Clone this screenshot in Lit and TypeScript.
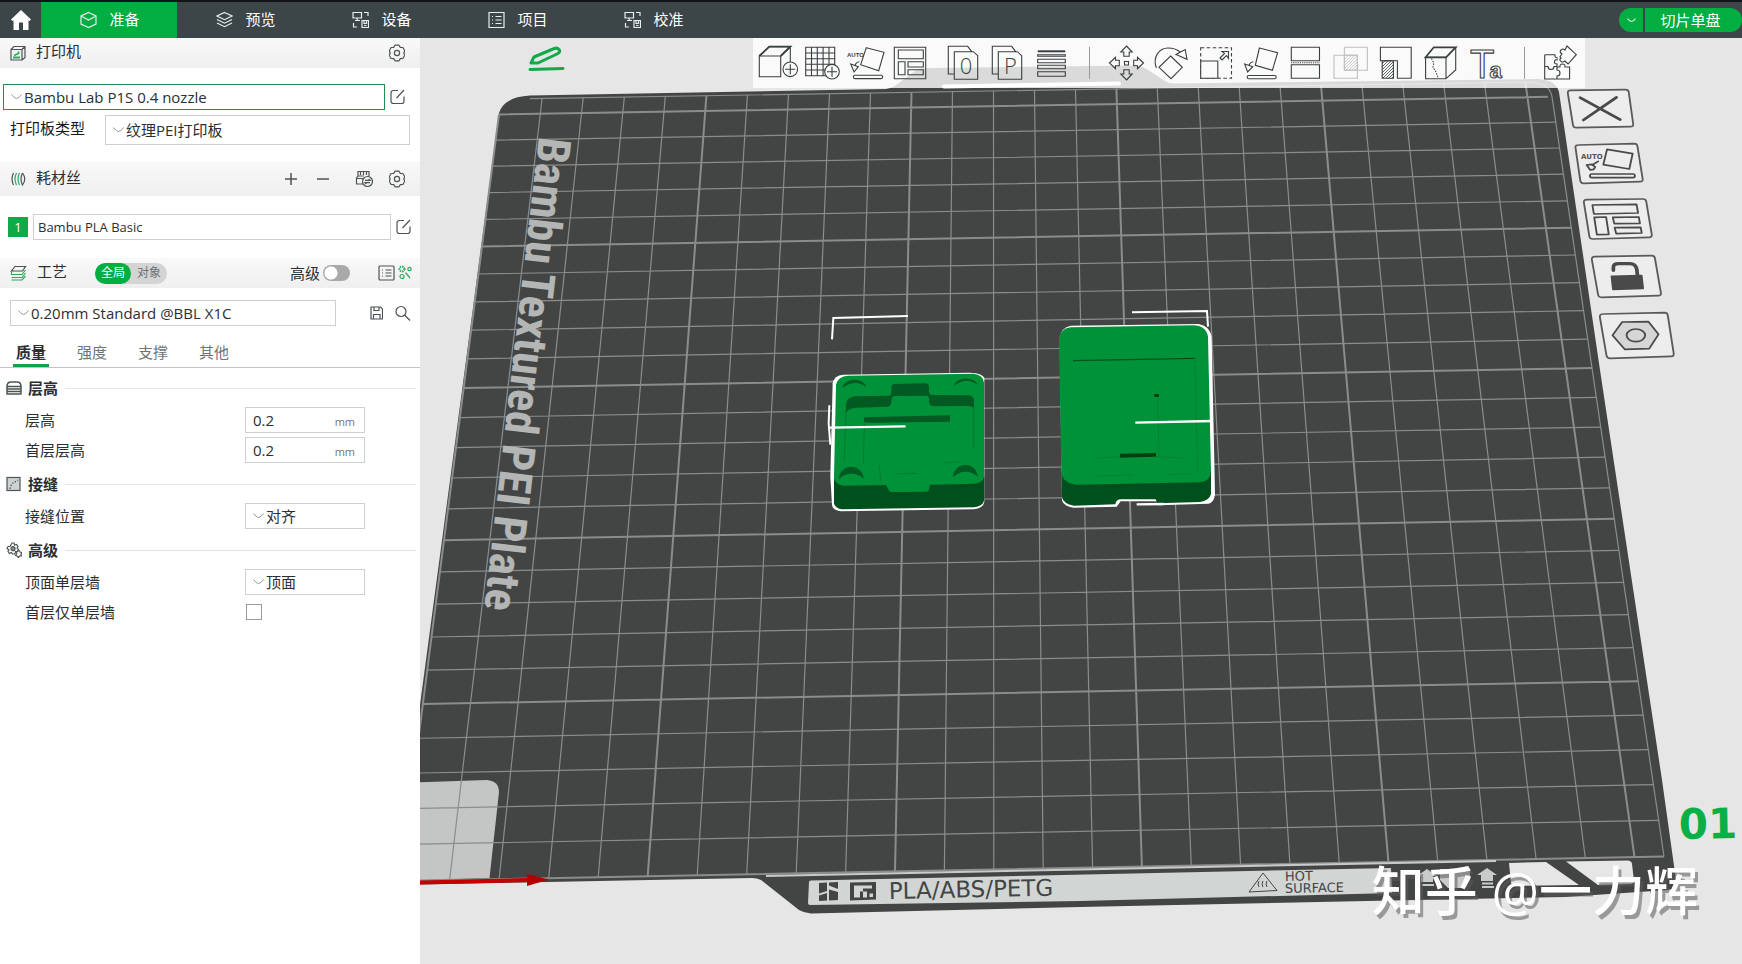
import { LitElement, html, svg, css, nothing } from "lit";
import { customElement, property } from "lit/decorators.js";

type Pt = [number, number];

/* ---------- build plate projection ---------- */

const BED = 25.6;
const MAJOR_TOP = 25;
const corner = {
  frontLeft: [400, 881] as Pt,
  frontRight: [1664, 856.5] as Pt,
  backRight: [1552, 96.7] as Pt,
  backLeft: [499, 114.4] as Pt,
};

function makeProjection(p0: Pt, p1: Pt, p2: Pt, p3: Pt) {
  const dx1 = p1[0] - p2[0];
  const dx2 = p3[0] - p2[0];
  const sx = p0[0] - p1[0] + p2[0] - p3[0];
  const dy1 = p1[1] - p2[1];
  const dy2 = p3[1] - p2[1];
  const sy = p0[1] - p1[1] + p2[1] - p3[1];
  const den = dx1 * dy2 - dx2 * dy1;
  const g = (sx * dy2 - dx2 * sy) / den;
  const h = (dx1 * sy - sx * dy1) / den;
  const a = p1[0] - p0[0] + g * p1[0];
  const b = p3[0] - p0[0] + h * p3[0];
  const d = p1[1] - p0[1] + g * p1[1];
  const e = p3[1] - p0[1] + h * p3[1];
  return (x: number, y: number): string => {
    const u = x / BED;
    const v = y / MAJOR_TOP;
    const w = g * u + h * v + 1;
    return `${((a * u + b * v + p0[0]) / w).toFixed(1)} ${((d * u + e * v + p0[1]) / w).toFixed(1)}`;
  };
}

const project = makeProjection(corner.frontLeft, corner.frontRight, corner.backRight, corner.backLeft);

function gridPath(major: boolean): string {
  const parts: string[] = [];
  for (let i = 0; i <= 25; i++) {
    if ((i % 5 === 0) !== major) continue;
    parts.push(`M${project(i, 0)}L${project(i, i === 0 ? 25 : BED)}`);
    parts.push(`M${project(0, i)}L${project(i === 25 ? 25.5 : BED, i)}`);
  }
  return parts.join("");
}

const MINOR = gridPath(false);
const MAJOR = gridPath(true);
const RIM = `M${project(0.7, BED)}L${project(25, BED)}Q${project(BED, BED)} ${project(BED, 25)}L${project(BED, 0)}`;

/* ---------- icons ---------- */

const plus = (x: number, y: number) => svg`<circle cx=${x} cy=${y} r="7.3" fill="#fafafa"/><path d="M${x - 5} ${y}h10M${x} ${y - 5}v10"/>`;
const hatch = svg`<defs><pattern id="hatch" width="3" height="3" patternUnits="userSpaceOnUse"><path d="M-1 1L1-1M0 3L3 0M2 4L4 2" stroke="currentColor" stroke-width=".8"/></pattern></defs>`;
const page = svg`<path d="M11.3 31H5.3V3.3H24.7L28.7 8.7M11.3 8.7H30.3L34.7 12.7V36.3H11.3Z"/>`;

const tools: Record<string, unknown> = {
  "添加": svg`<path d="M1.3 13H22.7V33.7H1.3ZM1.3 13L11.3 3.7H32.3L22.7 13M32.3 3.7V19"/><path stroke-width="1.8" d="M1.3 13L11.3 3.7H32.3L22.7 13"/>${plus(32.3, 26.3)}`,
  "添加盘": svg`<path d="M3.7 4.3H32.7V32.7H3.7ZM3.7 10H32.7M3.7 15.7H32.7M3.7 21.3H32.7M3.7 27H32.7M9.5 4.3V32.7M15.3 4.3V32.7M21.1 4.3V32.7M27 4.3V32.7"/>${plus(30, 28.7)}`,
  "自动朝向": svg`<text x="1" y="14" font-size="6" font-weight="700" fill="currentColor" stroke="none">AUTO</text><path d="M20.3 4.7L38 9.3 32.7 27.7 14.7 21.7ZM4.7 21L12.3 23.7 8 29ZM13.3 18.7Q10 19 9 22.5"/><rect x="7.3" y="32.3" width="29.4" height="3.3" rx="1.6"/>`,
  "自动摆放": svg`<path d="M4.3 4.3H35.7V35.7H4.3ZM8.3 7H33.3V15.7H8.3ZM8.3 18.7H15V31.7H8.3ZM18 18.7H33.3V24H18ZM18 26.7H33.3V31.7H18Z"/>`,
  "拆分为对象": svg`${page}<text class="thin" x="23" y="31" text-anchor="middle" font-size="22" fill="currentColor" stroke="none">0</text>`,
  "拆分为零件": svg`${page}<text class="thin" x="23.4" y="31" text-anchor="middle" font-size="22" fill="currentColor" stroke="none">P</text>`,
  "可变层高": svg`<path stroke-width="2" d="M6.7 8.3H34.3"/><path d="M6.7 11.8H34.3V13.3H6.7ZM6.7 16.3H34.3V19.7H6.7ZM6.7 22.3H34.3V25.7H6.7ZM6.7 28.7H34.3V33.3H6.7Z"/>`,
  "移动": svg`<path d="M18.5 18.5h4v3.5h-4ZM20.5 3L26.2 9H23.2V13.3H17.8V9H14.8ZM20.5 37L26.2 31H23.2V26.7H17.8V31H14.8ZM3.5 20L9.5 14.3V17.3H13.3V22.7H9.5V25.7ZM37.5 20L31.5 14.3V17.3H27.7V22.7H31.5V25.7Z"/>`,
  "旋转": svg`<path d="M19.6 13L31.3 24.3 20 35.7 8 24.3ZM5.3 25C1.5 14 8 5 17 5Q25 5 29.5 9.5M25 11.5L34.2 6.5 36 16.3Z"/>`,
  "缩放": svg`<path stroke-dasharray="3.5 2.5" d="M4.7 4.7H35.5V35.3H4.7Z"/><path fill="#fafafa" d="M4.7 18H21.8V35.3H4.7Z"/><path d="M24 15L28.5 10.5 26 8.5H32.5V15.5L30.5 12.5 26 17Z"/>`,
  "选择底面": svg`<path d="M18.4 5L36.6 9.7 31.4 27.3 14.3 22.3ZM3.6 21L11.8 23.7 6.6 29ZM12.3 18.7Q9 19 8 22.5"/><rect x="6.2" y="32.5" width="29" height="3.3" rx="1.6"/>`,
  "切割": svg`<path d="M5.3 4.3H33.5V17.7H5.3ZM5.3 21.7H33.5V35.3H5.3Z"/><path stroke-dasharray="1.2 1" d="M5 19.7H34"/>`,
  "布尔运算": svg`<g class="off"><path d="M13.4 4.3H36.4V27.3H13.4ZM3 12.3H26.4V35.3H3Z"/><path fill="url(#hatch)" d="M13.4 12.3H26.4V27.3H13.4Z"/></g>`,
  "支撑绘制": svg`<path d="M4.4 4.3H35.2V35.3H21.4V17.7H4.4Z"/><path fill="url(#hatch)" d="M6.2 17.7H17.4V35.3H6.2Z"/>`,
  "接缝绘制": svg`<path d="M4.6 14.3H25V35.7H4.6ZM34.7 4.3V27L25 35.7"/><path stroke-width="1.8" d="M4.6 14.3L12.8 4.3H34.7L25 14.3Z"/><path stroke-dasharray="1.5 1.2" d="M10.5 15.5L12.8 20 12 24 15 29 17.3 35.5"/>`,
  "文字形状": svg`<text x="4" y="35.3" font-size="40" fill="none">T<tspan font-size="22" font-weight="700" dx="-5">a</tspan></text>`,
  "装配视图": svg`<path d="M4.7 11.7H15Q14.5 15 18 15M4.7 11.7V23.5M4.7 23.5H8Q8 26.5 11 26.5T14 23.5H17V21Q14 21 14.5 18.5T18 17M4.7 23.5V36H29.6V24H25Q25.5 21 22.5 21T20 24H17V27Q20 27 20 30T17 33V36M20 13.7L22 11Q19 9 21 7T25 7L27 3 36.3 11.7 28 21 25 18Q22 20 20.5 18T21 15Z"/>`,
};

const gear = svg`<path d="M6 1.2h4l1.3 2.2 2.6.1 2 3.4-1.2 2.1 1.2 2.1-2 3.4-2.6.1L10 16.8H6l-1.3-2.2-2.6-.1-2-3.4L1.300 9 .1 6.900l2-3.400 2.600-.1Z" stroke-linejoin="round"/><circle cx="8" cy="9" r="2.600"/>`;
const editGlyph = svg`<path d="M8 1.500H3.500Q1 1.500 1 4V12Q1 14.500 3.500 14.500H11.500Q14 14.500 14 12V7.500M6.500 9L14 1"/>`;
const deviceGlyph = svg`<path d="M1 1.500H9.500V7H1ZM3 9.500H8M5.200 7V9.500M12 1.500H16V5M1.500 12V16H5M10 9.500H16.500V16.500H10ZM12 9.500V12.500H14.500V9.500M12 14.500H14.500"/>`;

const tabIcons: Record<string, unknown> = {
  "准备": svg`<path d="M8.500 1.500L16 5V13L8.500 16.500 1 13V5ZM1 5L8.500 9 16 5"/>`,
  "预览": svg`<path d="M8.500 1.500L16 5 8.500 8.700 1 5ZM1 8.500L8.500 12.200 16 8.500M1 12L8.500 15.700 16 12"/>`,
  "设备": deviceGlyph,
  "项目": svg`<path d="M1 1.500H16V16.500H1ZM4 5.500H5M4 9H5M4 12.500H5M7.500 5.500H13.500M7.500 9H13.500M7.500 12.500H13.500"/>`,
  "校准": deviceGlyph,
};

const icon = (body: unknown, w = 16, h = 18, cls = "") =>
  html`<svg class="ico ${cls}" width=${w} height=${h} viewBox="0 0 ${w} ${h}" aria-hidden="true">${body}</svg>`;

/* ---------- top bar ---------- */

@customElement("top-bar")
class TopBar extends LitElement {
  static styles = css`
    :host { display: block; }
    .bar { display: flex; align-items: stretch; height: 38px; box-sizing: border-box; background: #3c4547; border-top: 2px solid #101414; }
    button { font: inherit; border: 0; padding: 0; margin: 0; background: none; color: #fff; display: flex; align-items: center; justify-content: center; }
    nav { display: flex; flex: 1; }
    .home { width: 41px; }
    .tab { width: 136px; gap: 12px; font-size: 15px; padding-left: 2px; }
    .tab span { padding-bottom: 4px; }
    .on { background: #00ae42; }
    .ico { fill: none; stroke: #e9eded; stroke-width: 1.2; }
    .slice { display: flex; gap: 2px; align-self: center; height: 24px; }
    .more { width: 24px; background: #00ae42; border-radius: 12px 0 0 12px; }
    .go { width: 97px; background: #00ae42; border-radius: 0 12px 12px 0; font-size: 15px; padding: 0 6px 2px 0; box-sizing: border-box; }
  `;
  render() {
    return html`<header class="bar">
      <nav>
        <button class="home" aria-label="主页">
          <svg width="20" height="20" viewBox="0 0 20 20"><path fill="#fff" d="M10 0L20 9.500 18.500 11 17.500 10.200V20H12V12.500H8V20H2.500V10.200L1.500 11 0 9.500Z"/></svg>
        </button>
        ${Object.keys(tabIcons).map((t, i) => html`<button class="tab ${i === 0 ? "on" : ""}">${icon(tabIcons[t], 17, 18)}<span>${t}</span></button>`)}
      </nav>
      <div class="slice">
        <button class="more" aria-label="切片选项"><svg class="ico" width="9" height="5" viewBox="0 0 9 5"><path d="M.5.5Q2.500 3.500 4.500 3.500T8.500.5"/></svg></button>
        <button class="go">切片单盘</button>
      </div>
    </header>`;
  }
}

/* ---------- sidebar controls ---------- */

@customElement("drop-field")
class DropField extends LitElement {
  @property() value = "";
  @property() label = "";
  @property({ type: Boolean }) plain = false;
  @property({ type: Boolean }) active = false;
  static styles = css`
    :host { display: grid; box-sizing: border-box; }
    .box { display: grid; align-items: center; border: 1px solid #cfcfcf; background: #fff; }
    .active { border-color: #1f8f4d; }
    select, svg { grid-area: 1 / 1; }
    select { appearance: none; border: 0; outline: 0; background: none; color: #2b2f31; font: 15px "Open Sans", "Noto Sans CJK SC", sans-serif; padding: 0 4px 1px 20px; width: 100%; height: 100%; line-height: 22px; }
    .small { font-size: 13px; padding-left: 4px; }
    svg { margin-left: 7px; fill: none; stroke: #8f9698; pointer-events: none; }
  `;
  render() {
    return html`<div class="box ${this.active ? "active" : ""}">
      <select class=${this.plain ? "small" : ""} aria-label=${this.label}><option>${this.value}</option></select>
      ${this.plain ? nothing : html`<svg width="11" height="6" viewBox="0 0 11 6"><path d="M.5.5Q3.500 4.500 5.500 4.500T10.500.5"/></svg>`}
    </div>`;
  }
}

@customElement("side-panel")
class SidePanel extends LitElement {
  static styles = css`
    :host { display: block; background: #fff; color: #2b2f31; font-size: 15px; line-height: 20px; overflow: hidden; }
    button { font: inherit; border: 0; padding: 0; margin: 0; background: none; color: inherit; display: flex; align-items: center; }
    .ico { fill: none; stroke: #4c5355; stroke-width: 1.2; flex: none; }
    .green { stroke: #2faa5d; }
    h2 { font: inherit; margin: 0; }
    .head { display: flex; align-items: center; height: 30px; padding: 0 15px 0 10px; background: linear-gradient(#f9f9f9, #efefef); }
    .tall { height: 35px; }
    .process { padding-right: 8px; }
    .head h2 { padding-left: 10px; padding-bottom: 4px; }
    .push { margin-left: auto; }
    .acts { display: flex; align-items: center; margin-left: auto; }
    .g16 { gap: 16px; }
    .g12 { gap: 12px; }
    .sync { margin-left: 8px; }
    .stack { display: grid; gap: 5px; padding: 16px 10px 16px 3px; }
    .row { display: flex; align-items: stretch; gap: 5px; min-height: 26px; }
    .grow { flex: 1; }
    .kind { padding-left: 7px; width: 90px; line-height: 26px; color: #16191a; }
    .plate { min-height: 30px; }
    .edit { width: 20px; }
    .spool { padding: 18px 4px 18px 8px; }
    .num { width: 20px; height: 20px; align-self: center; background: #0fa948; color: #fff; font-size: 13px; justify-content: center; }
    .preset { padding: 12px 9px 0 10px; gap: 0; align-items: center; }
    .preset drop-field { width: 326px; height: 26px; }
    .switcher { display: flex; height: 21px; margin-left: 28px; background: #d4d4d4; border-radius: 11px; font-size: 12px; color: #6c7173; }
    .switcher button { padding: 0 6px; border-radius: 11px; }
    .switcher .on { background: #00ae42; color: #fff; }
    .adv { display: flex; align-items: center; gap: 3px; }
    .toggle { appearance: none; margin: 0; width: 27px; height: 16px; border-radius: 8px; background: radial-gradient(circle at 8px 8px, #fff 6px, #a9a9a9 7px); }
    .modes { gap: 3px; margin-left: 28px; }
    .tabs { display: flex; height: 42px; box-sizing: border-box; padding: 14px 0 0 13px; gap: 25px; border-bottom: 1px solid #c4c4c4; }
    .tabs button { width: 36px; justify-content: center; color: #6f7577; border-bottom: 3px solid transparent; }
    .tabs .on { color: #2b2f31; font-weight: 700; border-color: #12a04a; }
    .group { display: flex; align-items: center; gap: 6px; height: 20px; padding: 10px 4px 9px 6px; }
    section + section .group { padding-top: 11px; }
    .group h3 { font: inherit; font-weight: 700; margin: 0; padding-right: 1px; }
    .group hr { flex: 1; border: 0; border-top: 1px solid #e4e4e4; margin: 0; }
    .rows { display: grid; gap: 4px; }
    .opt { display: flex; height: 26px; align-items: center; padding-left: 25px; }
    .opt label { width: 220px; }
    .opt .box, .opt drop-field { width: 120px; height: 26px; box-sizing: border-box; }
    .box { display: flex; align-items: center; border: 1px solid #cfcfcf; padding: 0 9px 0 7px; }
    .box input { width: 40px; flex: 1; min-width: 0; border: 0; padding: 0; outline: 0; font: 15px "Open Sans", sans-serif; color: #2b2f31; }
    .unit { font-size: 11px; color: #6f7577; padding-top: 4px; }
    .tick { appearance: none; width: 16px; height: 16px; margin: 0 1px; border: 1px solid #9a9a9a; background: #fff; }
  `;
  private group(title: string, glyph: unknown, rows: unknown) {
    return html`<section><div class="group">${icon(glyph, 16, 16)}<h3>${title}</h3><hr /></div><div class="rows">${rows}</div></section>`;
  }
  private number(id: string, label: string) {
    return html`<div class="opt"><label for=${id}>${label}</label><span class="box"><input id=${id} value="0.2" /><span class="unit">mm</span></span></div>`;
  }
  private choice(label: string, value: string) {
    return html`<div class="opt"><label>${label}</label><drop-field label=${label} value=${value}></drop-field></div>`;
  }
  render() {
    return html`
      <div class="head">
        ${icon(svg`<path d="M1 4.500L4 1.500H15V12.500L12 15M1 4.500H12V15H1ZM12 4.500L15 1.500"/><path class="green" stroke-width="1.800" d="M3 12.500H10M4 10.500L8.500 8.500V6.500"/>`, 16, 16)}
        <h2>打印机</h2>
        <button class="push" aria-label="打印机设置">${icon(gear)}</button>
      </div>
      <div class="stack">
        <div class="row">
          <drop-field class="grow" active label="打印机" value="Bambu Lab P1S 0.4 nozzle"></drop-field>
          <button class="edit" aria-label="编辑打印机">${icon(editGlyph, 15, 16)}</button>
        </div>
        <div class="row plate">
          <span class="kind">打印板类型</span>
          <drop-field class="grow" label="打印板类型" value="纹理PEI打印板"></drop-field>
        </div>
      </div>
      <div class="head tall">
        ${icon(svg`<g class="green"><path d="M6.500 2Q3.500 8 6.500 14M9.500 2Q6.500 8 9.500 14"/></g><path d="M3.500 2Q.5 8 3.500 14M12.500 2Q9.500 8 12.500 14Q17 8 12.500 2"/>`, 16, 16)}
        <h2>耗材丝</h2>
        <div class="acts g16">
          <button aria-label="添加耗材丝">${icon(svg`<path stroke-width="1.5" d="M2 8H14M8 2V14"/>`, 16, 16)}</button>
          <button aria-label="删除耗材丝">${icon(svg`<path stroke-width="1.5" d="M2 8H14"/>`, 16, 16)}</button>
          <button class="sync" aria-label="同步耗材丝">${icon(svg`<path d="M8 14H1.500V8L3 6V1.500H14V7M3 6H9M5.500 2V5M8.500 2V5M11.500 2V5M1.500 8.500H8"/><circle cx="12.500" cy="11.500" r="5"/><path d="M10 10.300H15L13.700 9M15 12.700H10L11.300 14"/>`, 18, 18)}</button>
          <button aria-label="耗材丝设置">${icon(gear)}</button>
        </div>
      </div>
      <div class="row spool">
        <button class="num">1</button>
        <drop-field class="grow" plain label="耗材丝" value="Bambu PLA Basic"></drop-field>
        <button class="edit" aria-label="编辑耗材丝">${icon(editGlyph, 15, 16)}</button>
      </div>
      <div class="head process">
        ${icon(svg`<path d="M5 1.500H15.500L12.500 6H1.500Z"/><path class="green" d="M1.500 6V9.500H12L15.500 5M1.500 12.500H12L15.500 8M1.500 15H12L15.500 11"/>`, 17, 16)}
        <h2>工艺</h2>
        <div class="switcher"><button class="on">全局</button><button>对象</button></div>
        <div class="acts">
          <span class="adv"><label for="adv">高级</label><input id="adv" class="toggle" type="checkbox" /></span>
          <span class="acts modes">
            <button aria-label="列表">${icon(svg`<rect x="1" y="1" width="15" height="14" rx="1"/><path d="M4 5H5M4 8H5M4 11H5M7.500 5H13.500M7.500 8H13.500M7.500 11H13.500"/>`, 17, 16)}</button>
            <button aria-label="对比">${icon(svg`<g class="green"><circle cx="4" cy="4" r="2.500" stroke-dasharray="1.500 .8" stroke-width="2"/><circle cx="11.500" cy="4" r="1.700"/><circle cx="4" cy="11.500" r="2"/><path d="M7.500 7.500L12 13"/></g>`, 14, 16)}</button>
          </span>
        </div>
      </div>
      <div class="row preset">
        <drop-field label="工艺预设" value="0.20mm Standard @BBL X1C"></drop-field>
        <div class="acts g12">
          <button aria-label="保存">${icon(svg`<path d="M1 2H10.500L12.500 4V14H1ZM4 2V5.500H9V2M3.500 14V9.500H10V14"/>`, 13, 16)}</button>
          <button aria-label="搜索">${icon(svg`<circle cx="6" cy="6.500" r="5"/><path d="M9.500 10L15 15.500"/>`, 16, 16)}</button>
        </div>
      </div>
      <div class="tabs">
        ${["质量", "强度", "支撑", "其他"].map((t, i) => html`<button class=${i === 0 ? "on" : ""}>${t}</button>`)}
      </div>
      ${this.group("层高", svg`<path stroke-width="1.500" d="M1 6.500Q1 2 5 2H11Q15 2 15 6.500ZM1 9H15M1 11.500H15M1 14H15M1 6.500V14.500M15 6.500V14.500"/>`,
        html`${this.number("layer", "层高")}${this.number("first", "首层层高")}`)}
      ${this.group("接缝", svg`<rect x="1" y="1.500" width="13" height="13" fill="#cfd2d3"/><path stroke-dasharray="1.500 1.500" d="M4 13Q5 8 7 7T12 4"/>`,
        this.choice("接缝位置", "对齐"))}
      ${this.group("高级", svg`<path d="M6 1L8 1 8.500 3 10.500 2.500 12 4.500 11 6 12.500 7.500 11.500 9.500 9.500 9.500 9 12 6.500 12 5.500 10.500 3.500 11.500 2 9.500 3 8 1 6.500 2 4.500 4 4.500Z"/><circle cx="7" cy="6.700" r="2" fill="#8a9092"/><path fill="#fff" d="M11 9.500L13 8.500 14 10 15.700 10.500 15 12.500 15.500 14 13.500 14 12.500 15.500 11 14 9.500 13.500 10.500 12Z"/>`,
        html`${this.choice("顶面单层墙", "顶面")}
          <div class="opt"><label for="onewall">首层仅单层墙</label><input id="onewall" class="tick" type="checkbox" /></div>`)}
    `;
  }
}

/* ---------- 3D view ---------- */

const VIEW = { x: 420, y: 38, w: 1322, h: 926 };

interface PlateButton { label: string; x: number; y: number; w: number; h: number; body: unknown; text?: string }

/* Outlines are drawn on a 2.694 x 3 lattice that starts at (1160, 30). */
const plateButtons: PlateButton[] = [
  { label: "删除盘", x: 1094, y: 174, w: 186, h: 124, body: svg`<path class="pad" d="M1106 181L1254 179Q1262 179 1263 186L1275 282Q1276 290 1268 290L1122 293Q1114 293 1113 286L1099 190Q1098 181 1106 181Z"/><path stroke-width="8" d="M1132 203L1240 269M1230 202L1141 270"/>` },
  { label: "自动朝向", x: 1115, y: 335, w: 190, h: 128, text: "AUTO", body: svg`<path class="pad" d="M1127 344L1277 340Q1285 340 1286 348L1300 446Q1301 454 1293 454L1141 459Q1133 459 1132 451L1119 352Q1118 344 1127 344Z"/><path d="M1204 357L1273 370 1264 416 1194 403Z"/><path d="M1149 404L1163 402 1172 410 1168 417 1159 419ZM1164 404L1180 393"/><rect x="1158" y="431" width="121" height="11" rx="5"/>` },
  { label: "自动摆放", x: 1137, y: 501, w: 194, h: 131, body: svg`<path class="pad" d="M1150 509L1301 507Q1309 507 1310 514L1325 614Q1326 622 1318 622L1166 627Q1158 627 1157 620L1142 517Q1141 509 1150 509Z"/><path d="M1165 525L1284 523 1288 549 1169 552ZM1170 562L1202 561 1209 613 1177 614ZM1220 562L1290 561 1293 580 1224 581ZM1225 593L1295 592 1298 609 1229 611Z"/>` },
  { label: "锁定", x: 1159, y: 672, w: 197, h: 135, body: svg`<path class="pad" d="M1172 680L1325 677Q1333 677 1334 685L1350 789Q1351 797 1343 797L1190 802Q1182 802 1181 795L1164 689Q1163 680 1172 680Z"/><path stroke-width="10" d="M1222 721V712Q1222 701 1236 701H1266Q1282 701 1285 718L1287 738"/><path fill="#4a4a4a" d="M1217 739L1298 737 1302 775 1221 778Z"/>` },
  { label: "盘设置", x: 1179, y: 844, w: 210, h: 147, body: svg`<path class="pad" d="M1193 853L1358 849Q1366 849 1367 857L1383 972Q1384 980 1376 980L1212 986Q1203 986 1202 978L1184 862Q1183 853 1193 853Z"/><path fill="#d6d6d6" d="M1244 877L1315 876 1342 914 1317 957 1251 959 1218 917Z"/><ellipse cx="1281" cy="917" rx="25" ry="19"/>` },
];

@customElement("plate-view")
class PlateView extends LitElement {
  static styles = css`
    :host { display: grid; position: relative; background: #e6e6e6; overflow: hidden; min-width: 0; }
    .scene { grid-area: 1 / 1; width: 100%; height: 100%; min-height: 0; position: absolute; inset: 0; }
    button { font: inherit; border: 0; padding: 0; margin: 0; background: none; }
    .bar { position: absolute; top: 0; left: 333px; display: flex; align-items: center; height: 50px; padding: 0 3px; background: rgba(255, 255, 255, 0.8); color: #3a3f40; }
    .set { display: flex; }
    .set + .set { margin-left: 9px; }
    .bar button { width: 44px; height: 40px; color: inherit; display: grid; place-items: center; }
    .wide button { width: 45px; }
    .bar svg { fill: none; stroke: currentColor; stroke-width: 1.1; overflow: visible; font-family: "Liberation Sans", sans-serif; }
    .thin { font-family: "Open Sans", sans-serif; font-weight: 300; }
    .off { opacity: 0.3; }
    .sep { width: 1px; height: 32px; background: #9a9a9a; margin: 0 13px 0 16px; }
    .pin { position: absolute; }
    .pin svg { display: block; fill: none; stroke: #4a4a4a; stroke-width: 5; stroke-linejoin: round; stroke-linecap: round; }
    .pad { fill: #ededed; stroke: #5a5a5a; stroke-width: 5; }
    .cap { font: 700 7px "DejaVu Sans", sans-serif; fill: #555; stroke: none; }
    .plate { fill: #434544; }
    .minor { fill: none; stroke: #8b8d8c; stroke-width: 1.2; }
    .major { fill: none; stroke: #8b8d8c; stroke-width: 2; }
    .brand { font: 700 46px "Liberation Sans Narrow", "Roboto Condensed", "Open Sans Condensed", Roboto, sans-serif; fill: #b4b6b5; }
    .stamp { font: 23px "DejaVu Sans", sans-serif; fill: #434544; }
    .hot { font: 13px "DejaVu Sans", sans-serif; fill: #434544; }
    .index { font: 700 42px "DejaVu Sans", sans-serif; fill: #0ab045; }
    .sign { position: absolute; right: 44px; bottom: 43px; font-size: 53px; line-height: 60px; font-weight: 500; color: #fff; text-shadow: 3px 4px 0 rgba(90, 90, 90, 0.55); white-space: nowrap; }
  `;

  private scene() {
    return html`<svg class="scene" viewBox="${VIEW.x} ${VIEW.y} ${VIEW.w} ${VIEW.h}" preserveAspectRatio="xMinYMin slice" aria-hidden="true">
      <path class="plate" d="M396 885L499 113Q504 97 530 95.500L886 89Q893 88 899 83L915 71Q920 68 927 68L1134 65.600Q1142 66 1148 70L1165 81Q1170 84 1176 83.500L1538 79Q1556 80 1559 92L1600 370 1662 780 1676 880Q1677 889 1668 890L1565 897 1080 907 811 913.500Q804 913 799 910L761 880Q757 878 752 878L548 882Z"/>
      <path fill="#c4c6c5" d="M396 783L487 780Q499 781 499 792L489.500 878 396 881Z"/>
      <path class="minor" d=${MINOR}/>
      <path class="major" d=${MAJOR}/>
      <path class="minor" d=${RIM}/>
      <path stroke="#fff" stroke-width="4" stroke-linecap="round" d="M944 86.500L1119 83.500"/>
      <text class="brand" transform="translate(539 136) rotate(96.600)">Bambu Textured PEI Plate</text>
      <path stroke="#c8cac9" stroke-width="2" d="M766 876L1080 869.500 1496 861"/>
      <path fill="#d1d5d3" d="M809 882Q809 880.500 811 880.500L1391 868 1392 893 1080 901 810 905Q808 905 808 903Z"/>
      <g fill="#434544">
        <path d="M819 883L827 882.500V891L819 893.500ZM829 882.500L838 882V889L829 885.500ZM819 895.500L827 893V900.500L819 901ZM829 889.500L838 892V900L829 900.500Z"/>
        <path fill-rule="evenodd" d="M850 882.500L876 882V899.500L850 900.500ZM854 885.500V897.500H860V891.500H863V888.500H872V885.500ZM863 891.500V897.500H867V891.500ZM869.500 893.500V897H873V893.500Z"/>
      </g>
      <text class="stamp" transform="translate(889 899) rotate(-1.200)">PLA/ABS/PETG</text>
      <path fill="none" stroke="#434544" d="M1263 873L1277 890.500 1249 892ZM1259 887Q1257 884 1259 881M1263 887Q1261 884 1263 881M1267 887Q1265 884 1267 881"/>
      <text class="hot" transform="translate(1285 881) rotate(-1.200)">HOT</text>
      <text class="hot" transform="translate(1285 893) rotate(-1.200)">SURFACE</text>
      <g fill="#c9cbca"><path d="M1487 868L1497 875H1493V881H1481V875H1477ZM1482 882.500H1493V884.500H1482ZM1482 886H1494V888H1482ZM1427 869L1437 876H1433V882H1421V876H1417ZM1422 884H1434V886H1422ZM1440 869H1470V880L1462 888H1448L1440 880Z"/></g>
      <path fill="#e6e6e6" d="M1509 863L1546 862 1579 885 1516 886Q1512 886 1511 883ZM1566 861.500L1628 860.500Q1632 861 1632 864L1634 881Q1634 884 1630 884L1598 885Z"/>
      <path fill="none" stroke="#c40000" stroke-width="4" d="M400 883L530 880"/><path fill="#b40000" d="M527 874L549 879.500 527 886Z"/>
      ${this.models()}
      <text class="index" transform="translate(1679 839) rotate(-1)">01</text>
    </svg>`;
  }

  /* Both parts share one local space, three units to a pixel. */
  private models() {
    return svg`<g transform="translate(800 290) scale(.33333)">
      <g fill="none" stroke="#fff" stroke-width="6"><path d="M96 148L100 84 324 78M996 67L1221 63 1224 110M88 346L86 400 91 464"/></g>
      <path fill="#fff" d="M98 280Q102 256 130 254L510 248Q550 250 553 265V635Q550 655 520 658L122 664Q98 660 96 645L91 560Z"/>
      <path fill="#00501e" d="M102 565L553 560V630Q548 650 522 652L125 658Q104 654 102 640Z"/>
      <path fill="#009239" d="M108 284Q114 258 144 257L520 251Q550 254 552 278V560Q548 580 520 581L390 584 386 602Q384 605 376 605L275 606Q268 606 266 600L258 585 130 587Q102 582 102 560Z"/>
      <g fill="#005a22">
        <path d="M127 293A37 27 0 0 1 200 291Q180 278 164 279T127 293ZM462 287A37 27 0 0 1 534 285Q515 271 498 272T462 287ZM117 567A37 36 0 0 1 191 566Q175 551 154 551T117 567ZM459 562A37 36 0 0 1 533 560Q516 545 496 545T459 562Z"/>
        <path d="M138 365V345Q138 322 165 319L268 317Q274 316 274 305V292Q274 283 284 282L376 280Q387 281 387 292V305Q388 315 396 315L505 316Q521 318 522 330V354Q515 348 500 348L400 349Q388 348 387 334V325Q386 317 378 317L282 318Q274 322 274 335 273 349 262 350L170 353Q145 354 138 368Z"/>
        <path d="M192 382L450 376V395L210 398 192 396Z"/>
      </g>
      <g fill="none" stroke="#006b2a" stroke-width="2"><path d="M138 360L133 512M193 395L190 522M521 350V475M238 525L242 573M286 552L350 550M430 517L482 516"/></g>
      <path fill="none" stroke="#fff" stroke-width="7" stroke-linecap="round" d="M92 413L314 409"/>
      <path fill="#fff" d="M779 145Q783 112 812 107L1195 102Q1230 108 1235 140L1244 560 1245 615Q1240 640 1225 641L1075 646 1070 634H962L950 650 820 653Q792 648 786 632Z"/>
      <path fill="#00501e" d="M784 545L1233 545V612Q1228 632 1200 636L1072 640 1067 628H960Q948 630 946 643L822 647Q790 642 786 622Z"/>
      <path fill="#009239" d="M777 145Q783 114 812 112L1180 106Q1218 107 1224 140L1233 545Q1230 574 1200 577L830 584Q790 580 784 548Z"/>
      <path fill="none" stroke="#00501e" stroke-width="4" d="M819 212L1185 205"/>
      <g fill="none" stroke="#007a2e" stroke-width="2"><path d="M1185 205L1193 548M1073 320L1077 500M960 500L884 506M1068 500L1158 505M884 558L1000 555M1100 554L1170 552"/></g>
      <path fill="#004014" d="M1063 312H1077V321H1063ZM960 491L1068 489V500L960 503Z"/>
      <path stroke="#fff" stroke-width="7" d="M1006 398L1237 393"/><path stroke="#fff" stroke-width="7" d="M1010 643L1090 642"/>
    </g>`;
  }

  private tool(name: string) {
    return html`<button aria-label=${name}><svg width="40" height="40" viewBox="0 0 40 40">${tools[name]}${name === "布尔运算" || name === "支撑绘制" ? hatch : nothing}</svg></button>`;
  }

  private pin(b: PlateButton) {
    const left = 1160 + b.x / 2.694 - VIEW.x;
    const top = 30 + b.y / 3 - VIEW.y;
    const w = Math.round(b.w / 2.694);
    const h = Math.round(b.h / 3);
    return html`<button class="pin" aria-label=${b.label} style="left:${Math.round(left)}px;top:${Math.round(top)}px">
      <svg width=${w} height=${h} viewBox="0 0 ${w} ${h}"><g transform="scale(.3712 .3333) translate(${-b.x} ${-b.y})">${b.body}</g>${b.text ? svg`<text class="cap" x="7" y="17">${b.text}</text>` : nothing}</svg>
    </button>`;
  }

  render() {
    const names = Object.keys(tools);
    return html`${this.scene()}
      <button class="pin" aria-label="重命名盘" style="left:107px;top:8px">
        <svg width="38" height="26" viewBox="0 0 38 26"><g stroke="#12a94b" stroke-width="3"><path d="M3 23.500L36 22.500M4 17L7 11 26 3Q30 1 32 3.500T30 8L11 17Z"/></g></svg>
      </button>
      <div class="bar">
        <div class="set">${names.slice(0, 4).map((n) => this.tool(n))}</div>
        <div class="set">${names.slice(4, 7).map((n) => this.tool(n))}</div>
        <span class="sep"></span>
        <div class="set wide">${names.slice(7, 16).map((n) => this.tool(n))}</div>
        <span class="sep"></span>
        <div class="set">${this.tool(names[16])}</div>
      </div>
      ${plateButtons.map((b) => this.pin(b))}
      <div class="sign">知乎 @一力辉</div>`;
  }
}

@customElement("app-root")
class AppRoot extends LitElement {
  static styles = css`
    :host { display: grid; grid-template-rows: auto 1fr; height: 100vh; overflow: hidden; font-family: "Open Sans", "Noto Sans CJK SC", sans-serif; }
    .main { display: grid; grid-template-columns: 420px 1fr; min-height: 0; }
  `;
  render() {
    return html`<top-bar></top-bar><main class="main"><side-panel></side-panel><plate-view></plate-view></main>`;
  }
}
